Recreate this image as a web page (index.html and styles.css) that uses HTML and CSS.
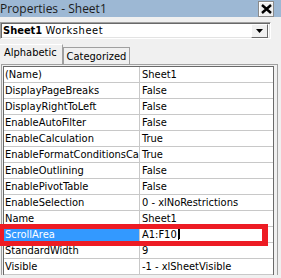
FILE: index.html
```html
<!DOCTYPE html>
<html lang="en">
<head>
    <meta charset="UTF-8">
    <title>Properties - Sheet1</title>
    <link rel="stylesheet" href="styles.css">
</head>
<body>
    <div class="window">
        <div class="titlebar">
            <span class="title">Properties - Sheet1</span>
            <span class="close">
                <svg width="11" height="10" viewBox="0 0 11 10"><path d="M1 1 L10 9 M10 1 L1 9" stroke="#000" stroke-width="2.4"/></svg>
            </span>
        </div>

        <div class="combo">
            <div class="combo-field"><b>Sheet1</b> <span class="type">Worksheet</span></div>
            <div class="combo-btn">
                <svg width="7" height="4" viewBox="0 0 7 4"><path d="M0 0 H7 L3.5 4 Z" fill="#000"/></svg>
            </div>
        </div>

        <div class="tabs">
            <div class="tab active">Alphabetic</div>
            <div class="tab">Categorized</div>
        </div>

        <div class="grid-frame">
            <div class="grid">
                <div class="row"><div class="name">(Name)</div><div class="value">Sheet1</div></div>
                <div class="row"><div class="name">DisplayPageBreaks</div><div class="value">False</div></div>
                <div class="row"><div class="name">DisplayRightToLeft</div><div class="value">False</div></div>
                <div class="row"><div class="name">EnableAutoFilter</div><div class="value">False</div></div>
                <div class="row"><div class="name">EnableCalculation</div><div class="value">True</div></div>
                <div class="row"><div class="name">EnableFormatConditionsCalculation</div><div class="value">True</div></div>
                <div class="row"><div class="name">EnableOutlining</div><div class="value">False</div></div>
                <div class="row"><div class="name">EnablePivotTable</div><div class="value">False</div></div>
                <div class="row"><div class="name">EnableSelection</div><div class="value">0 - xlNoRestrictions</div></div>
                <div class="row"><div class="name">Name</div><div class="value">Sheet1</div></div>
                <div class="row selected"><div class="name">ScrollArea</div><div class="value">A1:F10<span class="caret"></span></div></div>
                <div class="row"><div class="name">StandardWidth</div><div class="value">9</div></div>
                <div class="row"><div class="name">Visible</div><div class="value">-1 - xlSheetVisible</div></div>
            </div>
        </div>

        <div class="mark"></div>
    </div>
</body>
</html>
```

FILE: styles.css
```css
body {
    margin: 0;
    background: #f0f0f0;
    overflow: hidden;
}

.window {
    position: relative;
    width: 281px;
    height: 278px;
    font-family: "DejaVu Sans Condensed", "DejaVu Sans", sans-serif;
    font-stretch: condensed;
    font-size: 11px;
    color: #000;
}

.titlebar {
    display: flex;
    align-items: center;
    justify-content: space-between;
    height: 17px;
    background: #9db8d4;
}
.title {
    font-family: "Open Sans", "Liberation Sans", sans-serif;
    font-stretch: normal;
    font-size: 12px;
    color: #1b1b1b;
}
.close {
    display: flex;
    align-items: center;
    justify-content: center;
    width: 14px;
    height: 14px;
    margin-right: 7px;
    margin-top: 1px;
    background: #f0f0f0;
    border: 1px solid #8a8a8a;
    box-shadow: inset 1px 1px 0 #fff;
}

.combo {
    display: flex;
    align-items: center;
    width: 269px;
    height: 15px;
    margin-top: 5px;
    background: #fff;
    border-top: 1px solid #a0a0a0;
    border-left: 1px solid #a0a0a0;
    border-right: 1px solid #fff;
    border-bottom: 1px solid #fff;
    box-shadow: inset 1px 1px 0 #696969, inset -1px -1px 0 #e3e3e3;
}
.combo-field {
    flex: 1;
    padding-left: 2px;
    white-space: nowrap;
}
.type {
    letter-spacing: 0.6px;
}
.combo-btn {
    display: flex;
    align-items: center;
    justify-content: center;
    width: 15px;
    height: 12px;
    margin-right: 2px;
    margin-top: 1px;
    background: #f0f0f0;
    border-top: 1px solid #fff;
    border-left: 1px solid #fff;
    border-right: 1px solid #696969;
    border-bottom: 1px solid #696969;
}

.tabs {
    display: flex;
    align-items: flex-end;
    height: 20px;
    margin-top: 5px;
}
.tab {
    height: 16px;
    padding: 0 3px;
    line-height: 17px;
    border: 1px solid #a0a0a0;
    border-bottom: none;
    background: #f0f0f0;
    white-space: nowrap;
}
.tab.active {
    height: 19px;
    padding: 0 5px 0 4px;
    line-height: 16px;
    border-left: none;
    border-color: #fff #a0a0a0 #fff #fff;
}

.grid-frame {
    width: 271px;
    margin-left: 1px;
    padding: 1px 3px 0 1px;
    border-top: 1px solid #a0a0a0;
    border-left: 1px solid #a0a0a0;
    border-right: 1px solid #a0a0a0;
}
.grid {
    border-top: 1px solid #696969;
    border-left: 1px solid #696969;
    border-right: 1px solid #696969;
    background: #fff;
}

.row {
    display: flex;
    height: 15px;
    line-height: 16px;
    border-bottom: 1px solid #c8c8c8;
    white-space: nowrap;
}
.name {
    width: 134px;
    padding-left: 1px;
    overflow: hidden;
    border-right: 1px solid #c8c8c8;
}
.value {
    flex: 1;
    padding-left: 2px;
    overflow: hidden;
}
.selected .name {
    background: #3399ff;
    color: #fff;
}
.caret {
    display: inline-block;
    width: 1px;
    height: 12px;
    margin-left: 1px;
    vertical-align: -2px;
    background: #000;
    box-shadow: 1px -1px 0 #000;
}

.mark {
    position: absolute;
    left: 0;
    top: 224px;
    width: 258px;
    height: 12px;
    border: 5px solid #ed1c24;
    border-left-width: 4px;
    border-right-width: 6px;
}
```
